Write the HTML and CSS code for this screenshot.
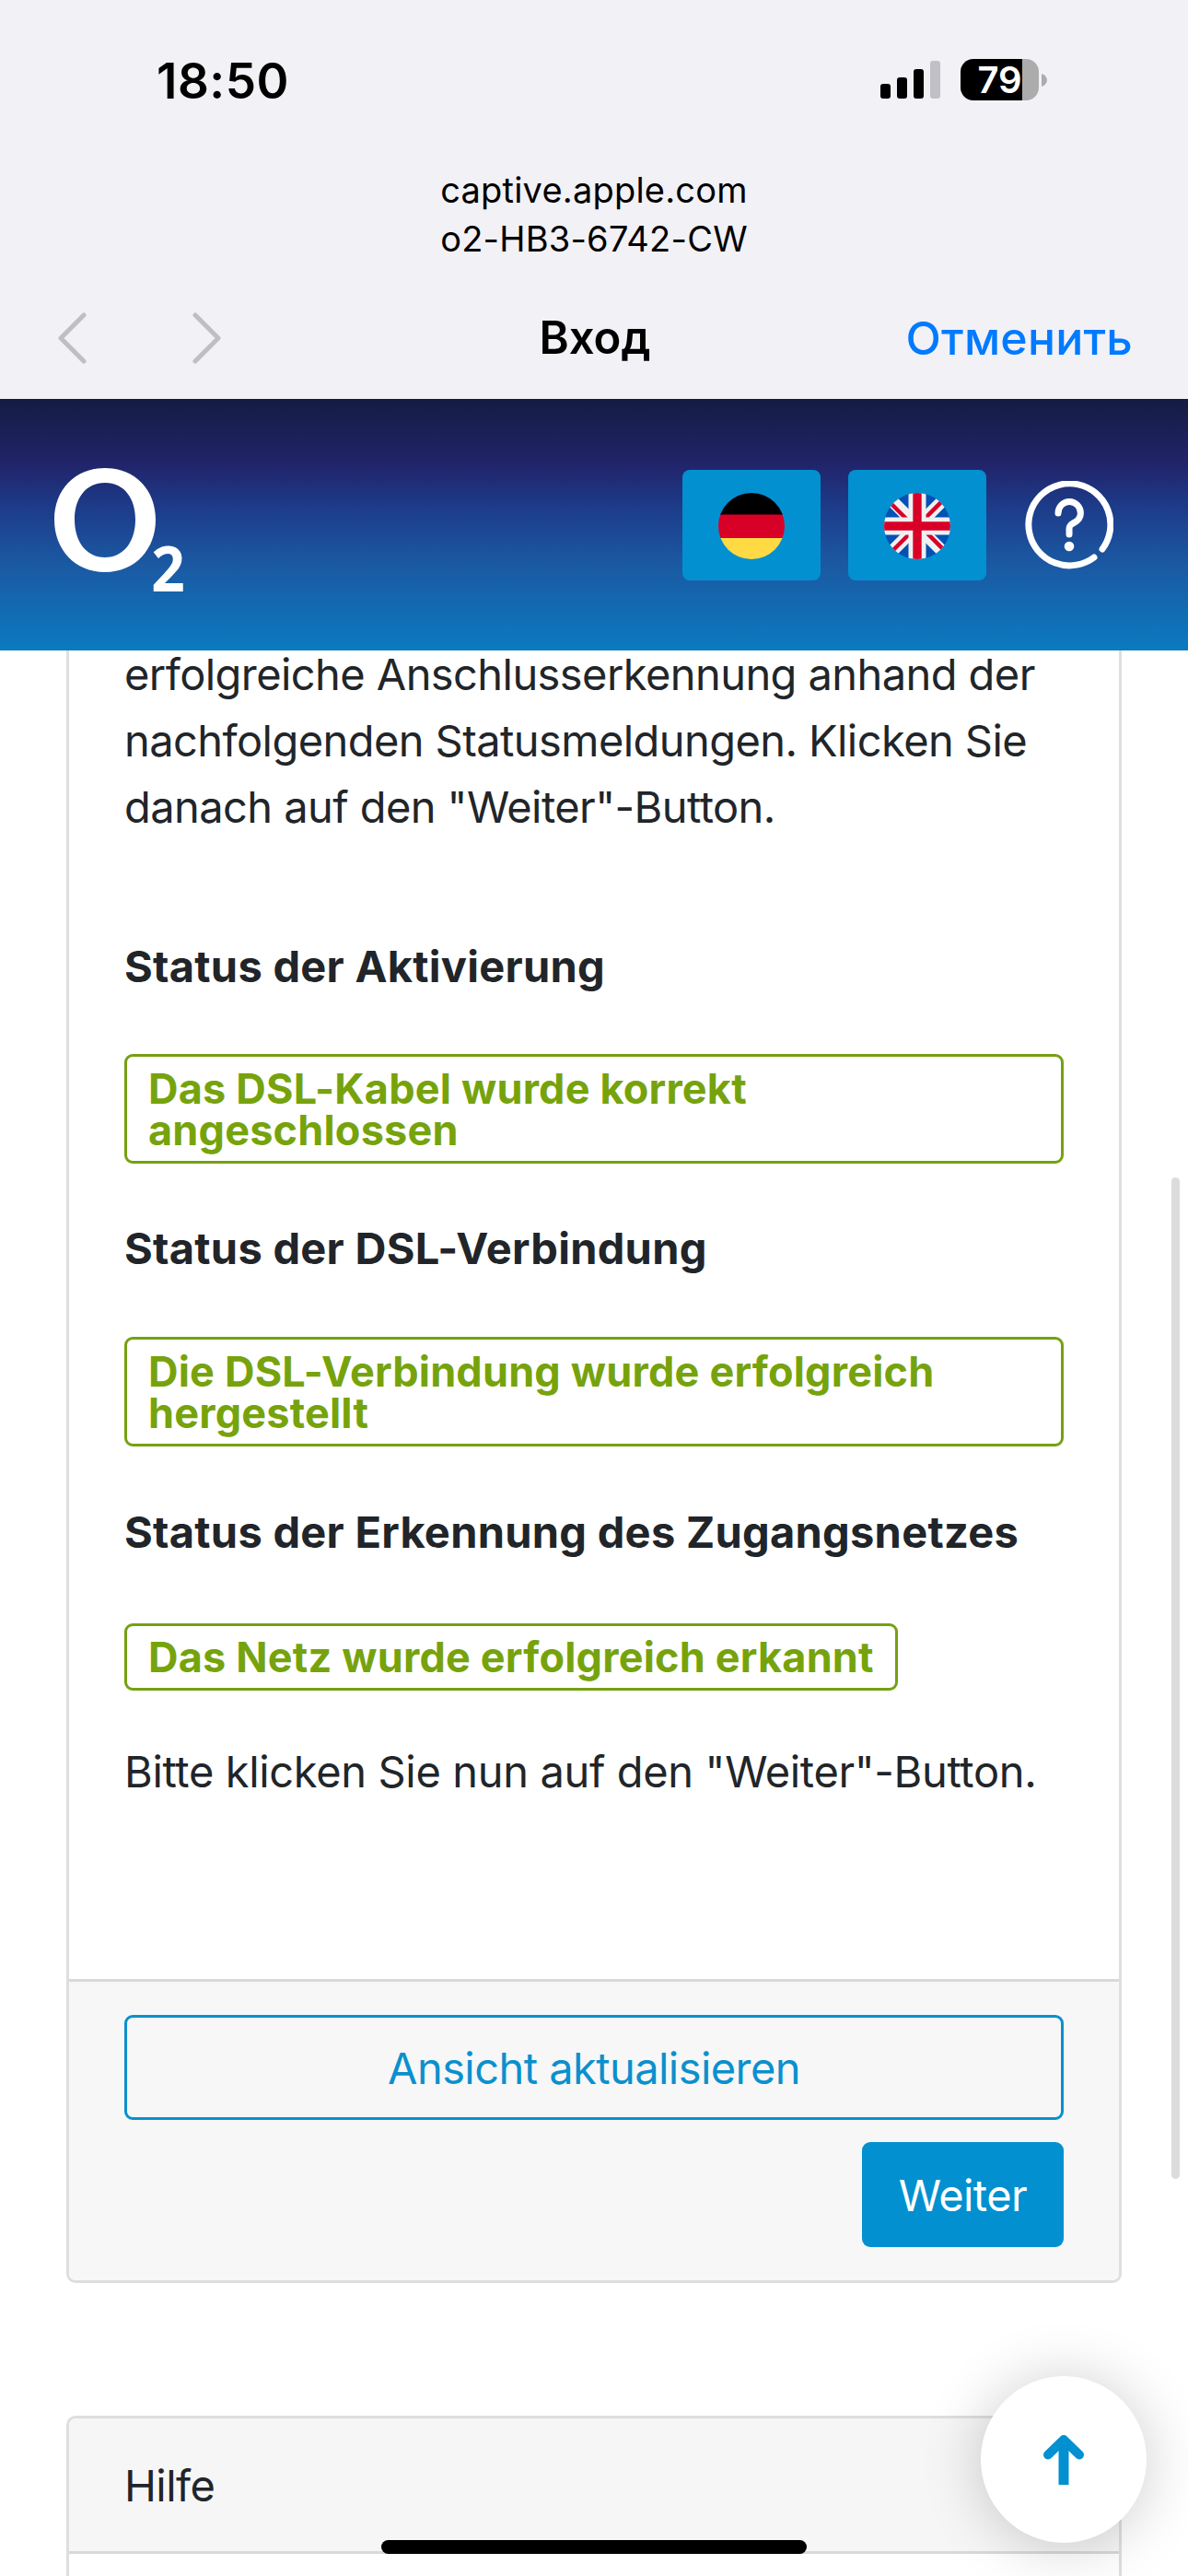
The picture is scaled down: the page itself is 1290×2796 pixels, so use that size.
FILE: index.html
```html
<!DOCTYPE html>
<html lang="de">
<head>
    <meta charset="UTF-8">
    <meta name="viewport" content="width=device-width, initial-scale=1.0">
    <title>Anschlusserkennung</title>
    <link rel="stylesheet" href="styles.css">
</head>
<body>
    <!-- status bar -->
    <div class="statusbar">
        <span class="time">18:50</span>
        <div class="indicators">
            <svg class="signal" width="66" height="42" viewBox="0 0 66 42">
                <rect x="0" y="25" width="11" height="16" rx="3"/>
                <rect x="18" y="18" width="11" height="23" rx="3"/>
                <rect x="36" y="9" width="11" height="32" rx="3"/>
                <rect x="54" y="0" width="11" height="41" rx="3" fill="#c1c0c6"/>
            </svg>
            <div class="battery">79</div>
            <svg width="6" height="14" viewBox="0 0 6 14"><path d="M0 0C8 3 8 11 0 14z" fill="#acacb0"/></svg>
        </div>
    </div>

    <!-- captive portal bar -->
    <div class="address">
        <div class="host">captive.apple.com</div>
        <div class="ssid">o2-HB3-6742-CW</div>
    </div>
    <nav class="navbar">
        <div class="arrows">
            <svg width="32" height="56" viewBox="0 0 32 56"><path d="M29 3L4 28l25 25"/></svg>
            <svg width="32" height="56" viewBox="0 0 32 56"><path d="M3 3l25 25L3 53"/></svg>
        </div>
        <span class="title">Вход</span>
        <a class="cancel">Отменить</a>
    </nav>

    <header class="header">
        <svg class="logo" width="144" height="138" viewBox="0 0 144 138">
            <path fill="#fff" fill-rule="evenodd" d="M55 0C88 0 110 24 110 56S88 113 55 113 0 88 0 56 22 0 55 0zM55 16C34 16 22 33 22 56S34 97 55 97 88 79 88 56 76 16 55 16z"/>
            <text x="112" y="134" transform="scale(0.94 1)" class="logo-sub">2</text>
        </svg>
        <div class="tools">
            <button class="lang">
                <svg width="72" height="72" viewBox="0 0 72 72">
                    <clipPath id="round"><circle cx="36" cy="36" r="36"/></clipPath>
                    <g clip-path="url(#round)">
                        <rect width="72" height="24" fill="#000"/>
                        <rect y="23.500" width="72" height="25.500" fill="#d80027"/>
                        <rect y="49" width="72" height="23" fill="#ffda44"/>
                    </g>
                </svg>
            </button>
            <button class="lang">
                <svg width="72" height="72" viewBox="0 0 72 72">
                    <g clip-path="url(#round)">
                        <rect width="72" height="72" fill="#0052b4"/>
                        <path d="M0 0l72 72M72 0L0 72" stroke="#f0f0f0" stroke-width="13"/>
                        <path d="M2 6l27 27M43 29L69 3M3 69l26-26M43 40l27 27" stroke="#d80027" stroke-width="4.500"/>
                        <path d="M36 0v72M0 36h72" stroke="#f0f0f0" stroke-width="19"/>
                        <path d="M36 0v72M0 36h72" stroke="#d80027" stroke-width="9.400"/>
                    </g>
                </svg>
            </button>
            <svg class="help" width="96" height="96" viewBox="0 0 96 96">
                <path d="M75 83A44.500 44.500 0 1 1 84 74"/>
                <path d="M36 35a12.200 12.500 0 0 1 24.400 0C60.400 41 57 43.500 53 45.500S48 49 48 52v6"/>
                <circle cx="48" cy="71" r="5.300" fill="#fff" stroke="none"/>
            </svg>
        </div>
    </header>

    <main>
        <section class="card">
            <div class="card-body">
                <p>erfolgreiche Anschlusserkennung anhand der<br>nachfolgenden Statusmeldungen. Klicken Sie<br>danach auf den "Weiter"-Button.</p>
                <h4>Status der Aktivierung</h4>
                <div class="badge">Das DSL-Kabel wurde korrekt<br>angeschlossen</div>
                <h4>Status der DSL-Verbindung</h4>
                <div class="badge">Die DSL-Verbindung wurde erfolgreich<br>hergestellt</div>
                <h4 class="last">Status der Erkennung des Zugangsnetzes</h4>
                <div class="badge badge-single">Das Netz wurde erfolgreich erkannt</div>
                <p class="hint">Bitte klicken Sie nun auf den "Weiter"-Button.</p>
            </div>
            <div class="card-footer">
                <button class="btn btn-outline">Ansicht aktualisieren</button>
                <button class="btn btn-primary">Weiter</button>
            </div>
        </section>

        <section class="card help-card">
            <div class="card-header">Hilfe</div>
        </section>
    </main>

    <div class="scrollbar"></div>
    <button class="to-top">
        <svg width="44" height="54" viewBox="0 0 44 54"><path d="M22 54V8" stroke-width="11"/><path d="M5 21.500L22 5 39 21.500" stroke-width="10" stroke-linecap="round" stroke-linejoin="round"/></svg>
    </button>
    <div class="home-indicator"></div>
</body>
</html>
```
FILE: styles.css
```css
* {
    box-sizing: border-box;
}

body {
    position: relative;
    width: 1290px;
    height: 2796px;
    margin: 0;
    overflow: hidden;
    background-color: #fff;
    color: #212529;
    font-family: Inter, "Noto Sans", sans-serif;
    font-size: 47px;
    line-height: 72px;
    letter-spacing: -0.57px;
}

button {
    border: none;
    padding: 0;
    font-family: inherit;
    letter-spacing: inherit;
}

svg {
    display: block;
}

/* status bar */
.statusbar {
    display: flex;
    justify-content: space-between;
    height: 174px;
    padding: 64px 153px 0 170px;
    background-color: #f2f1f6;
    color: #000;
    letter-spacing: 0;
}

.time {
    font-size: 53px;
    font-weight: 600;
    line-height: 48px;
    letter-spacing: 0.5px;
}

.indicators {
    display: flex;
    align-items: center;
    height: 45px;
}

.signal {
    margin-right: 21px;
}

.battery {
    width: 85px;
    height: 45px;
    margin-right: 3px;
    border-radius: 14px;
    background: linear-gradient(to right, #000 67px, #acacac 67px);
    color: #fff;
    font-size: 40px;
    font-weight: 600;
    line-height: 45px;
    text-align: center;
}

/* address and navigation */
.address {
    height: 126px;
    padding-top: 6px;
    background-color: #f2f1f6;
    color: #000;
    font-size: 38px;
    line-height: 53px;
    letter-spacing: 0.2px;
    text-align: center;
}

.navbar {
    display: grid;
    grid-template-columns: 1fr auto 1fr;
    align-items: center;
    height: 133px;
    padding: 0 60px 0 62px;
    background-color: #f2f1f6;
    font-size: 49px;
    letter-spacing: 0;
}

.arrows {
    display: flex;
    gap: 115px;
}

.arrows path {
    fill: none;
    stroke: #bfbec3;
    stroke-width: 5;
    stroke-linecap: round;
    stroke-linejoin: round;
}

.title {
    color: #000;
    font-weight: 600;
}

.cancel {
    justify-self: end;
    color: #007aff;
    font-size: 50px;
    font-weight: 500;
    letter-spacing: 0.2px;
}

/* o2 header */
.header {
    position: relative;
    z-index: 1;
    display: flex;
    justify-content: space-between;
    height: 273px;
    padding: 75px 81px 0 59px;
    background: linear-gradient(#141c42, #21246a 26%, #1d3a88 42%, #1b58a2 65%, #0b7bc0);
}

.logo-sub {
    fill: #fff;
    font-family: "Open Sans", sans-serif;
    font-size: 68px;
    font-weight: 700;
}

.tools {
    display: flex;
    gap: 30px;
    margin-top: 2px;
}

.lang {
    display: flex;
    align-items: center;
    justify-content: center;
    width: 150px;
    height: 120px;
    padding-top: 2px;
    border-radius: 8px;
    background-color: #0290d0;
}

.help {
    margin: 12px 0 0 12px;
    fill: none;
    stroke: #fff;
    stroke-width: 7;
    stroke-linecap: round;
}

/* cards */
main {
    padding: 0 72px;
}

.card {
    border: 3px solid #dedede;
    border-radius: 10px;
}

main .card:first-child {
    margin-top: -10px;
    border-top: none;
    border-radius: 0 0 10px 10px;
}

.card-body {
    height: 1452px;
    padding: 0 60px;
}

p {
    margin: 0;
}

h4 {
    margin: 62px 0 67px;
    font-size: 47px;
    font-weight: 700;
    line-height: 58px;
    letter-spacing: 0.28px;
}

p + h4 {
    margin: 108px 0 66px;
}

/* keeps the second row one pixel lower */
p + h4 + .badge {
    margin-bottom: 63px;
}

h4.last {
    margin: 64px 0 70px;
}

.badge {
    height: 119px;
    padding: 12px 23px;
    border: 3px solid #76a012;
    border-radius: 9px;
    color: #76a30c;
    font-size: 45px;
    font-weight: 700;
    line-height: 45px;
    letter-spacing: 0.2px;
    white-space: nowrap;
}

.badge-single {
    width: 840px;
    height: 73px;
    padding: 11px 23px;
}

.hint {
    margin-top: 52px;
    letter-spacing: -0.35px;
}

.card-footer {
    display: flex;
    flex-direction: column;
    align-items: flex-end;
    gap: 24px;
    height: 327px;
    padding: 36px 60px;
    border-top: 3px solid #d9d9d9;
    border-radius: 0 0 8px 8px;
    background-color: #f7f7f7;
}

.btn {
    height: 114px;
    padding-top: 2px;
    border-radius: 9px;
    font-size: 47px;
    line-height: 72px;
}

.btn-outline {
    width: 100%;
    border: 3px solid #0b90cd;
    background: none;
    color: #0b90cd;
}

.btn-primary {
    width: 219px;
    background-color: #0290d0;
    color: #fff;
}

.help-card {
    height: 300px;
    margin-top: 144px;
}

.card-header {
    height: 147px;
    padding: 37px 60px;
    border-bottom: 3px solid #d9d9d9;
    border-radius: 8px 8px 0 0;
    background-color: #f6f6f6;
}

/* floating over the page */
.scrollbar {
    position: absolute;
    top: 1278px;
    right: 9px;
    width: 9px;
    height: 1087px;
    border-radius: 5px;
    background-color: #dcdcdc;
}

.to-top {
    position: absolute;
    right: 45px;
    bottom: 36px;
    display: flex;
    align-items: center;
    justify-content: center;
    width: 180px;
    height: 181px;
    border-radius: 50%;
    background-color: #fff;
    box-shadow: 0 3px 66px rgba(0, 0, 0, 0.2);
}

.to-top path {
    fill: none;
    stroke: #0290d0;
}

.home-indicator {
    position: absolute;
    left: 414px;
    bottom: 24px;
    width: 462px;
    height: 15px;
    border-radius: 8px;
    background-color: #000;
}
```
